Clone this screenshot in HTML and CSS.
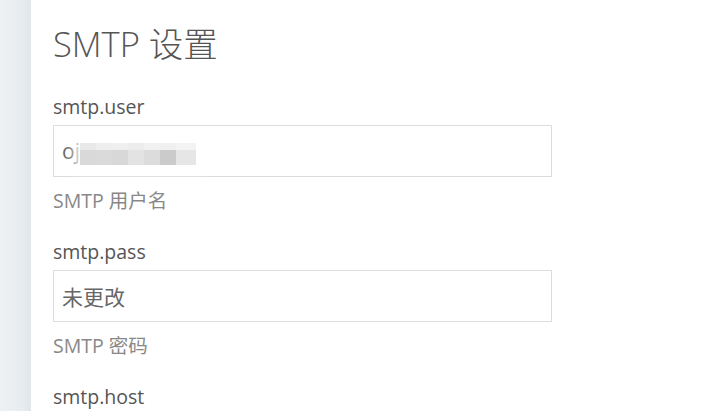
FILE: index.html
```html
<!DOCTYPE html>
<html lang="zh-CN">
<head>
<meta charset="utf-8">
<title>SMTP 设置</title>
<link rel="stylesheet" href="styles.css">
</head>
<body>
<div class="layout">
  <aside class="sidebar"></aside>
  <main class="content">
    <h1 class="title">SMTP 设置</h1>
    <div class="field">
      <label class="label">smtp.user</label>
      <div class="input"><span class="value">oj</span><span class="mosaic"><i class="m1"></i><i class="m2"></i><i class="m3"></i><i class="m4"></i><i class="m5"></i><i class="m6"></i><i class="m7"></i></span></div>
      <div class="help">SMTP 用户名</div>
    </div>
    <div class="field">
      <label class="label">smtp.pass</label>
      <div class="input"><span class="value">未更改</span></div>
      <div class="help">SMTP 密码</div>
    </div>
    <div class="field">
      <label class="label">smtp.host</label>
    </div>
  </main>
</div>
</body>
</html>
```
FILE: styles.css
```css
html, body {
  margin: 0;
  padding: 0;
  background: #fff;
  height: 100%;
  overflow: hidden;
}
body {
  font-family: "Open Sans", "Noto Sans CJK SC", sans-serif;
  color: #555;
}
.layout {
  display: flex;
  height: 411px;
}
.sidebar {
  width: 31px;
  flex: none;
  background: linear-gradient(to right, #eef1f3 0%, #e8ecef 70%, #dfe5e9 100%);
}
.content {
  flex: 1;
  padding: 22px 0 0 22px;
}
.title {
  margin: 0 0 28px 0;
  font-size: 34.5px;
  font-weight: 300;
  line-height: 44px;
  color: #555;
}
.field {
  display: flex;
  flex-direction: column;
  margin-bottom: 25px;
}
.label {
  font-size: 19.5px;
  line-height: 26px;
  color: #555;
  margin-bottom: 5px;
}
.input {
  width: 499px;
  height: 52px;
  border: 1px solid #dcdcdc;
  display: flex;
  align-items: center;
  padding-left: 8px;
  box-sizing: border-box;
}
.value {
  font-size: 21px;
  color: #666;
}
.mosaic {
  display: flex;
  height: 22px;
  margin-top: 5px;
  box-shadow: 0 0 10px 6px rgba(255,255,255,0.9);
}
.mosaic i {
  display: block;
  width: 16px;
  height: 22px;
}
.m1 { background: linear-gradient(#e9e9e9 30%, #d9d9d9 30%); }
.m2 { background: linear-gradient(#eeeeee 30%, #dadada 30%); }
.m3 { background: linear-gradient(#efefef 30%, #d8d8d8 30%); }
.m4 { background: linear-gradient(#ececec 30%, #e3e3e3 30%); }
.m5 { background: linear-gradient(#f1f1f1 30%, #dcdcdc 30%); }
.m6 { background: linear-gradient(#f0f0f0 30%, #cbcbcc 30%); }
.m7 { background: linear-gradient(#f3f3f3 30%, #e6e6e6 30%); width: 20px !important; }
.help {
  font-size: 19.5px;
  line-height: 26px;
  color: #888;
  margin-top: 11px;
}
```
